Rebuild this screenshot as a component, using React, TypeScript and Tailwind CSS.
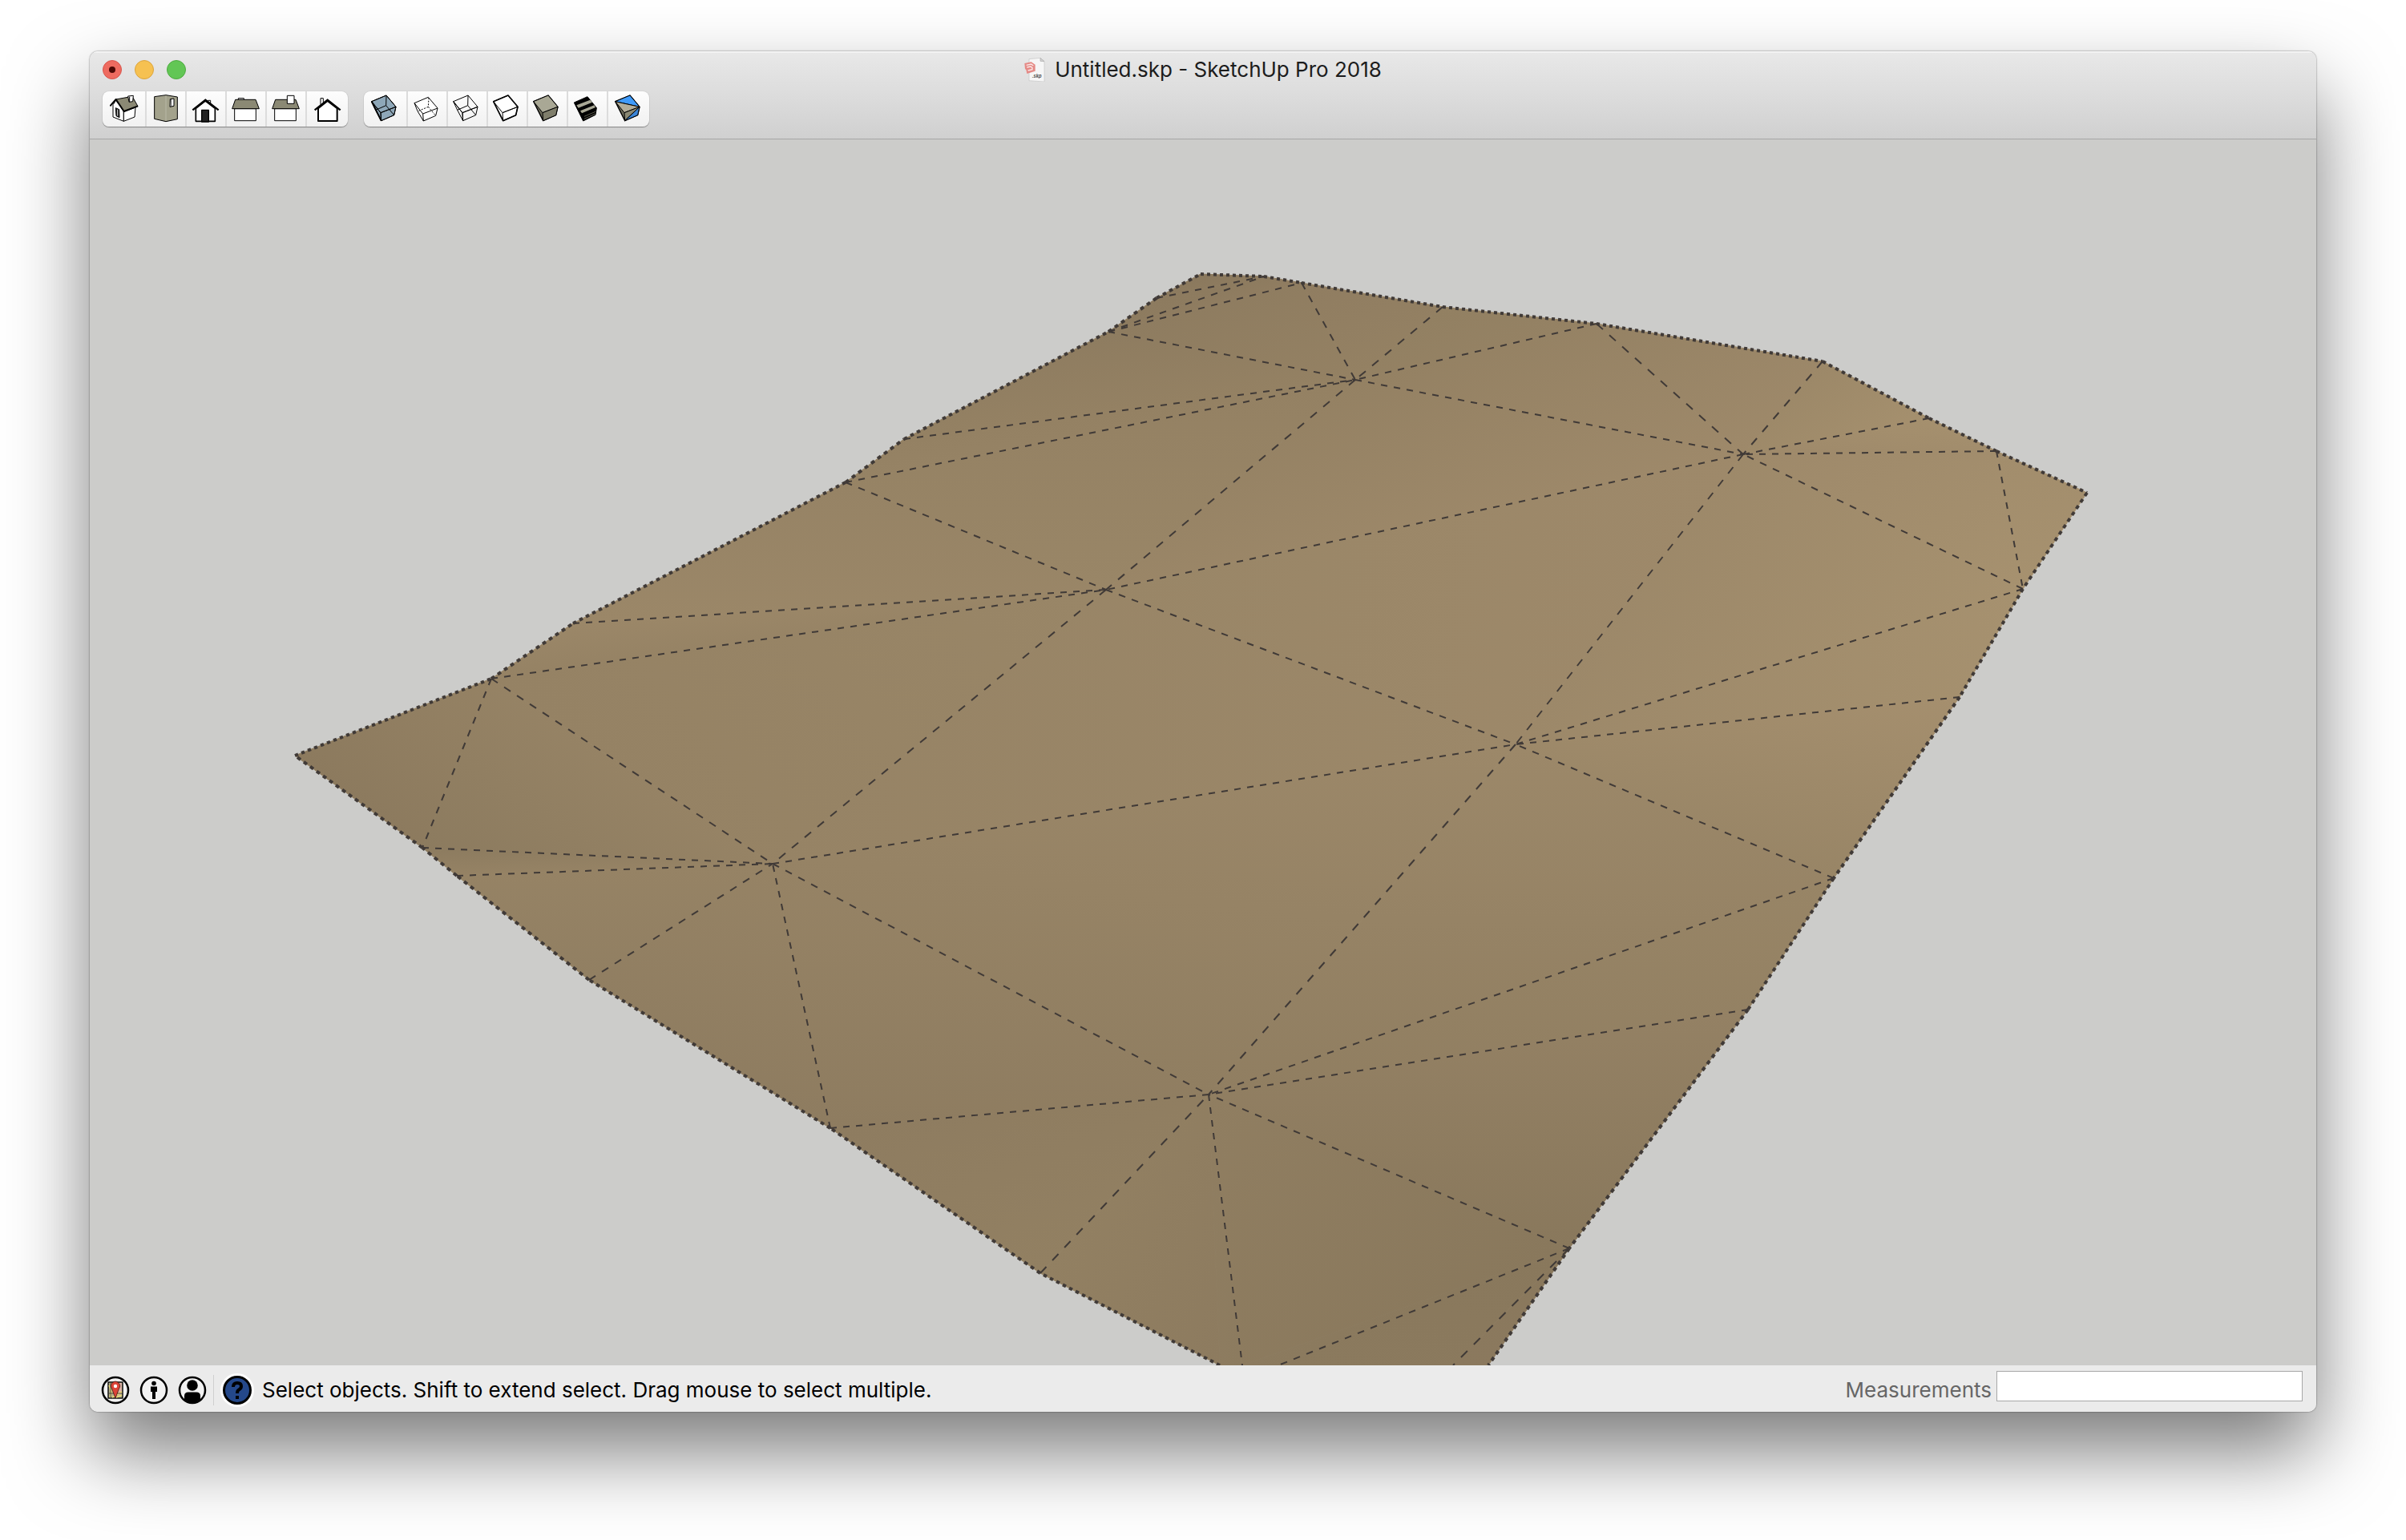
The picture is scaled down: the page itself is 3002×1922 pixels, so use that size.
import React from 'react'

// Types
type Point = [number, number]

interface Vertex {
  at: Point
  shade: number
}

interface ToolItem {
  label: string
  icon: React.ReactNode
}

// Terrain vertices: position on the canvas and shade, 0 is darkest and 1 is lightest
const vertices: Record<string, Vertex> = {
  a: { at: [1498, 342], shade: 0.05 },
  b: { at: [1577, 345], shade: 0.15 },
  c: { at: [1624, 353], shade: 0.24 },
  d: { at: [1800, 383], shade: 0.32 },
  e: { at: [1992, 404], shade: 0.42 },
  f: { at: [2274, 451], shade: 0.62 },
  g: { at: [2407, 522], shade: 0.92 },
  h: { at: [2491, 563], shade: 0.82 },
  i: { at: [2604, 615], shade: 0.88 },
  j: { at: [2524, 735], shade: 0.95 },
  k: { at: [2445, 870], shade: 0.9 },
  l: { at: [2288, 1096], shade: 0.5 },
  m: { at: [2181, 1260], shade: 0.38 },
  n: { at: [1958, 1558], shade: 0.02 },
  o: { at: [1857, 1704], shade: 0.08 },
  p: { at: [1522, 1704], shade: 0.16 },
  q: { at: [1298, 1589], shade: 0.32 },
  r: { at: [1036, 1408], shade: 0.2 },
  s: { at: [735, 1223], shade: 0.28 },
  t: { at: [570, 1093], shade: 0.42 },
  u: { at: [527, 1058], shade: 0.14 },
  v: { at: [368, 943], shade: 0.12 },
  w: { at: [613, 847], shade: 0.42 },
  x: { at: [715, 778], shade: 0.6 },
  y: { at: [1055, 602], shade: 0.44 },
  z: { at: [1128, 548], shade: 0.36 },
  aa: { at: [1383, 414], shade: 0.2 },
  ab: { at: [1443, 372], shade: 0.15 },
  i1: { at: [1691, 474], shade: 0.36 },
  i2: { at: [2175, 567], shade: 0.68 },
  i3: { at: [1380, 736], shade: 0.54 },
  i4: { at: [1891, 929], shade: 0.64 },
  i5: { at: [964, 1078], shade: 0.44 },
  i6: { at: [1508, 1366], shade: 0.26 },
  b1: { at: [1550, 1704], shade: 0.13 },
  b2: { at: [1595, 1704], shade: 0.1 },
  b3: { at: [1813, 1704], shade: 0.08 },
}

const triangles = [
  'a b ab', 'ab b aa', 'aa b c', 'aa c i1', 'c d i1', 'd e i1', 'e i1 i2', 'e f i2',
  'f g i2', 'g h i2', 'h j i2', 'h i j', 'j i2 i4', 'j k i4', 'k l i4', 'l i4 i6',
  'l m i6', 'm n i6', 'i1 i2 i3', 'i2 i3 i4', 'aa z i1', 'z y i1', 'y i1 i3', 'y x i3',
  'x w i3', 'w i3 i5', 'i3 i4 i5', 'i4 i5 i6', 'w u v', 'w u i5', 'u t i5', 't s i5',
  's r i5', 'r i5 i6', 'r q i6', 'q p i6', 'p b1 i6', 'i6 b1 n', 'b1 b2 n', 'b2 b3 n', 'b3 o n',
]

const innerEdges = [
  'ab b', 'aa b', 'aa c', 'aa i1', 'c i1', 'd i1', 'e i1', 'i1 i2', 'i1 i3', 'z i1', 'y i1',
  'y i3', 'e i2', 'f i2', 'g i2', 'h i2', 'j i2', 'i2 i3', 'i2 i4', 'h j', 'j i4', 'k i4',
  'l i4', 'i3 i4', 'x i3', 'w i3', 'i3 i5', 'w i5', 'w u', 'u i5', 't i5', 's i5', 'r i5',
  'i5 i4', 'i5 i6', 'i4 i6', 'l i6', 'm i6', 'n i6', 'r i6', 'q i6', 'i6 b1', 'n b2', 'n b3',
]

const outerEdges = [
  'a b', 'b c', 'c d', 'd e', 'e f', 'f g', 'g h', 'h i', 'i j', 'j k', 'k l', 'l m', 'm n',
  'n o', 'p q', 'q r', 'r s', 's t', 't u', 'u v', 'v w', 'w x', 'x y', 'y z', 'z aa', 'aa ab', 'ab a',
]

const pick = (names: string) => names.split(' ').map((name) => vertices[name])

const shadeColor = (t: number) => {
  const mix = (from: number, to: number) => Math.round(from + (to - from) * t)
  return `rgb(${mix(136, 168)}, ${mix(119, 146)}, ${mix(92, 112)})`
}

// A shade that varies linearly over a triangle is a linear gradient along its slope
const Facet: React.FC<{ names: string }> = ({ names }) => {
  const [p, q, r] = pick(names)
  const [ax, ay] = [q.at[0] - p.at[0], q.at[1] - p.at[1]]
  const [bx, by] = [r.at[0] - p.at[0], r.at[1] - p.at[1]]
  const det = ax * by - ay * bx
  const dq = q.shade - p.shade
  const dr = r.shade - p.shade
  const gx = (dq * by - dr * ay) / det
  const gy = (ax * dr - bx * dq) / det
  const steep = gx * gx + gy * gy
  const low = Math.min(p.shade, q.shade, r.shade)
  const high = Math.max(p.shade, q.shade, r.shade)
  const along = (shade: number): Point => [
    p.at[0] + (gx * (shade - p.shade)) / steep,
    p.at[1] + (gy * (shade - p.shade)) / steep,
  ]
  const points = [p, q, r].map((v) => v.at.join(',')).join(' ')
  if (steep === 0) {
    return <polygon points={points} fill={shadeColor(low)} stroke={shadeColor(low)} />
  }
  const id = `facet-${names.replace(/ /g, '-')}`
  const [x1, y1] = along(low)
  const [x2, y2] = along(high)
  return (
    <>
      <linearGradient id={id} gradientUnits="userSpaceOnUse" x1={x1} y1={y1} x2={x2} y2={y2}>
        <stop offset="0" stopColor={shadeColor(low)} />
        <stop offset="1" stopColor={shadeColor(high)} />
      </linearGradient>
      <polygon points={points} fill={`url(#${id})`} stroke={`url(#${id})`} strokeLinejoin="round" />
    </>
  )
}

// The dash is measured along the longer axis of the line, as a stippled GL line is
const Edge: React.FC<{ names: string; dash: number; width: number }> = ({ names, dash, width }) => {
  const [p, q] = pick(names)
  const dx = q.at[0] - p.at[0]
  const dy = q.at[1] - p.at[1]
  const length = (dash * Math.hypot(dx, dy)) / Math.max(Math.abs(dx), Math.abs(dy))
  return (
    <line
      x1={p.at[0]}
      y1={p.at[1]}
      x2={q.at[0]}
      y2={q.at[1]}
      stroke="#403a37"
      strokeWidth={width}
      strokeDasharray={`${length} ${length}`}
    />
  )
}

const Terrain: React.FC = () => (
  <svg viewBox="112 174 2778 1530" className="block w-full" role="img" aria-label="Terrain">
    {triangles.map((names) => <Facet key={names} names={names} />)}
    {innerEdges.map((names) => <Edge key={names} names={names} dash={8} width={2} />)}
    {outerEdges.map((names) => <Edge key={names} names={names} dash={4} width={4} />)}
  </svg>
)

// Toolbar icons
const Icon: React.FC<{ children: React.ReactNode }> = ({ children }) => (
  <svg viewBox="0 0 108 108" className="w-9 h-9" fill="none" stroke="#000" strokeWidth="3" strokeLinejoin="round">
    {children}
  </svg>
)

const views: ToolItem[] = [
  {
    label: 'Iso',
    icon: (
      <Icon>
        <path d="M12 38 23 22 52 62V100L12 84Z" fill="#fff" />
        <path d="M52 64 96 48 93 84 52 100Z" fill="#fff" />
        <path d="M22 50 35 56 36 86 24 80Z" fill="#222" />
        <path d="M29 56V80" stroke="#ddd" />
        <path d="M23 18 84 7 105 44 53 64Z" fill="#8b8974" />
        <path d="M1 43 23 18 53 63 105 43" strokeWidth="6" />
        <path d="M68 6 88 4 86 26 72 28Z" fill="#fff" />
        <path d="M74 8V27" />
      </Icon>
    ),
  },
  {
    label: 'Top',
    icon: (
      <Icon>
        <path d="M11 8 54 2 97 9V92L54 101 11 91Z" fill="#a3a28c" />
        <path d="M54 4V99" stroke="#c4c3b4" strokeWidth="2" />
        <path d="M70 17 84 15V43L69 46Z" fill="#fff" />
        <path d="M74 17V44" strokeWidth="2" />
      </Icon>
    ),
  },
  {
    label: 'Front',
    icon: (
      <Icon>
        <path d="M62 28V22H71V34" />
        <path d="M16 52 52 24 88 52V100H16Z" fill="#fff" strokeWidth="5" />
        <path d="M38 102V58H64V102Z" fill="#222" strokeWidth="4" />
        <path d="M4 58 52 20 101 58" strokeWidth="7" strokeLinejoin="miter" />
      </Icon>
    ),
  },
  {
    label: 'Right',
    icon: (
      <Icon>
        <path d="M25 18V14H46V18" />
        <path d="M11 53H91V98H11Z" fill="#fff" />
        <path d="M14 19H90L103 53H2Z" fill="#8b8974" />
      </Icon>
    ),
  },
  {
    label: 'Back',
    icon: (
      <Icon>
        <path d="M11 53H91V98H11Z" fill="#fff" />
        <path d="M14 19H90L103 53H2Z" fill="#8b8974" />
        <path d="M58 4H84V34H58Z" fill="#fff" />
      </Icon>
    ),
  },
  {
    label: 'Left',
    icon: (
      <Icon>
        <path d="M27 38V14H37V30" fill="#fff" />
        <path d="M18 52 53 24 89 52V99H18Z" fill="#fff" strokeWidth="6" />
        <path d="M5 58 53 20 101 58" strokeWidth="7" strokeLinejoin="miter" />
      </Icon>
    ),
  },
]

const cubeTop = 'M2 26 57 3 93 46 36 68Z'
const cubeFront = 'M36 68 93 46 86 77 38 98Z'
const cubeSide = 'M2 26 36 68 38 98 17 58Z'
const cubeBack = 'M57 3 56 41M56 41 17 58M56 41 86 77'
const cubeHull = 'M2 26 57 3 93 46 86 77 38 98Z'

const styles: ToolItem[] = [
  {
    label: 'X-Ray',
    icon: (
      <Icon>
        <path d={cubeHull} fill="#8ea7b8" />
        <path d={`${cubeTop}${cubeFront}${cubeSide}${cubeBack}`} />
        <path d="M2 26 38 98" strokeWidth="6" />
      </Icon>
    ),
  },
  {
    label: 'Back Edges',
    icon: (
      <Icon>
        <path d="M6 32 58 10 93 51 86 79 40 99 18 62Z" fill="#fff" />
        <path d="M6 32 38 72 93 51M38 72 40 99" />
        <path d="M60 12 58 46M58 46 20 62M58 46 86 79" strokeDasharray="6 5" />
      </Icon>
    ),
  },
  {
    label: 'Wireframe',
    icon: (
      <Icon>
        <path d={`${cubeTop}${cubeFront}${cubeSide}${cubeBack}`} />
      </Icon>
    ),
  },
  {
    label: 'Hidden Line',
    icon: (
      <Icon>
        <path d={cubeHull} fill="#fff" strokeWidth="5" />
        <path d={`${cubeTop}${cubeFront}`} />
      </Icon>
    ),
  },
  {
    label: 'Shaded',
    icon: (
      <Icon>
        <path d={cubeHull} fill="#6b6a5a" strokeWidth="4" />
        <path d={cubeTop} fill="#a9a895" />
        <path d={cubeFront} fill="#7f7e6b" />
      </Icon>
    ),
  },
  {
    label: 'Shaded With Textures',
    icon: (
      <Icon>
        <path d="M4 30 54 8 88 50 84 76 38 99Z" fill="#000" />
        <path d="M13 40 64 20 72 29 20 50ZM27 61 79 40 84 48 33 70Z" fill="#a9a895" stroke="none" />
        <path d="M42 82 84 64M42 91 84 72" stroke="#8b8974" strokeWidth="2" />
      </Icon>
    ),
  },
  {
    label: 'Monochrome',
    icon: (
      <Icon>
        <path d={cubeHull} fill="#6b6a5a" strokeWidth="4" />
        <path d="M2 26 57 3 93 46Z" fill="#3f9bfb" />
        <path d="M2 26 93 46 36 68Z" fill="#b3ae9a" />
        <path d="M36 68 93 46 38 98Z" fill="#8b8974" />
        <path d="M93 46 86 77 38 98Z" fill="#3b84d6" />
      </Icon>
    ),
  },
]

// ToolGroup Component
const ToolGroup: React.FC<{ label: string; items: ToolItem[] }> = ({ label, items }) => (
  <div
    role="group"
    aria-label={label}
    className="flex h-11 rounded-lg bg-linear-to-b from-[#fdfdfd] to-[#f1f1f1] divide-x-2 divide-[#dcdcdc] shadow-[0_1px_1px_rgba(0,0,0,0.35),0_0_1px_rgba(0,0,0,0.3)]"
  >
    {items.map((item) => (
      <button
        key={item.label}
        type="button"
        aria-label={item.label}
        className="w-[50px] first:w-[55px] last:w-[51px] flex items-center justify-center"
      >
        {item.icon}
      </button>
    ))}
  </div>
)

const FileIcon: React.FC = () => (
  <svg viewBox="0 0 78 90" className="w-[26px] h-[30px]">
    <path d="M18 5 60 1 75 14V90L18 86Z" fill="#f6f6f6" stroke="#c4c4c4" strokeWidth="2" />
    <path d="M60 1V13L75 14Z" fill="#d2d2d2" stroke="#aaa" strokeWidth="2" />
    <path d="M1 21 26 16 41 26V50L10 60 7 46 3 42Z" fill="#e58a86" />
    <path d="M8 28 26 24 34 30M10 36 24 33 30 38 30 44 14 48" fill="none" stroke="#fbe9e8" strokeWidth="4" />
    <text x="29" y="75" fontSize="17" fontWeight="700" fontStyle="italic" fill="#555" fontFamily="Inter, sans-serif">
      .skp
    </text>
  </svg>
)

// TitleBar Component
const TitleBar: React.FC = () => (
  <header className="bg-linear-to-b from-[#e8e8e8] to-[#d0d0d0] border-t-2 border-t-[#f3f3f3] border-b border-b-[#a6a6a6]">
    <div className="h-[42px] px-4 grid grid-cols-[1fr_auto_1fr] items-center">
      <div className="flex gap-4">
        <button
          type="button"
          aria-label="Close"
          className="w-6 h-6 rounded-full bg-[#ee6b60] border border-[#d9544b] flex items-center justify-center"
        >
          <span className="w-2 h-2 rounded-full bg-[#4d0905]" />
        </button>
        <button type="button" aria-label="Minimize" className="w-6 h-6 rounded-full bg-[#f6c151] border border-[#dca43c]" />
        <button type="button" aria-label="Zoom" className="w-6 h-6 rounded-full bg-[#62c655] border border-[#4dab40]" />
      </div>
      <div className="flex items-center gap-3">
        <FileIcon />
        <h1 className="text-[26px] leading-8 text-[#1c1c1c] whitespace-nowrap">Untitled.skp - SketchUp Pro 2018</h1>
      </div>
    </div>
    <div className="px-4 pt-[6px] pb-[15px] flex gap-5">
      <ToolGroup label="Views" items={views} />
      <ToolGroup label="Styles" items={styles} />
    </div>
  </header>
)

// StatusBar Component
const StatusBar: React.FC = () => (
  <footer className="h-[58px] pl-[14px] pr-[17px] bg-[#ebebeb] flex items-center justify-between">
    <div className="pt-1 flex items-center">
      <div className="flex items-center gap-3">
        <button type="button" aria-label="Geo-location">
          <svg viewBox="0 0 36 36" className="w-9 h-9">
            <circle cx="18" cy="18" r="16" fill="#f2f2f2" stroke="#000" strokeWidth="2.5" />
            <path d="M9 8H27V28H9Z" fill="#b9b48c" stroke="#111" strokeWidth="1.5" />
            <path d="M21 9H26V22L21 25Z" fill="#dcb3a6" />
            <path d="M10 12 13 20 11 27M14 27 26 20M19 27 26 24" fill="none" stroke="#ecdc74" strokeWidth="1.5" />
            <path d="M12 9V27M10 22H26" stroke="#333" strokeWidth="0.8" />
            <path d="M18 28 13.5 16A5.5 5.5 0 1 1 22.5 16Z" fill="#dc4438" stroke="#4a1410" strokeWidth="0.8" />
            <circle cx="18" cy="13" r="2.2" fill="#fff" />
          </svg>
        </button>
        <button type="button" aria-label="Credits">
          <svg viewBox="0 0 36 36" className="w-9 h-9">
            <circle cx="18" cy="18" r="16" fill="#f2f2f2" stroke="#000" strokeWidth="2.5" />
            <circle cx="18" cy="9.5" r="2.8" />
            <path d="M14 13.5H22V20H20V29H16V20H14Z" />
          </svg>
        </button>
        <button type="button" aria-label="Sign in">
          <svg viewBox="0 0 36 36" className="w-9 h-9">
            <circle cx="18" cy="18" r="16" fill="#f2f2f2" stroke="#000" strokeWidth="2.5" />
            <circle cx="18" cy="12" r="6.8" />
            <path d="M8 30V25Q8 20.5 13 20.5H23Q28 20.5 28 25V30Q18 37 8 30Z" />
          </svg>
        </button>
      </div>
      <div className="mx-2 w-px h-[38px] bg-[#cfcfcf]" />
      <button type="button" aria-label="Help" className="w-[42px] h-[42px] rounded-full bg-white flex items-center justify-center">
        <svg viewBox="0 0 36 36" className="w-9 h-9">
          <circle cx="18" cy="18" r="16.5" fill="#24488a" stroke="#000" strokeWidth="3" />
          <path d="M13 14Q13 9 18 9Q23 9 23 13Q23 16 20 17.5Q18 18.5 18 22" fill="none" stroke="#000" strokeWidth="4" />
          <path d="M16 25H20V29H16Z" />
        </svg>
      </button>
      <p className="ml-[10px] text-[26px] leading-7 text-black whitespace-nowrap">
        Select objects. Shift to extend select. Drag mouse to select multiple.
      </p>
    </div>
    <div className="self-start pt-[7px] flex items-end gap-[6px]">
      <label htmlFor="measurements" className="text-[26px] leading-7 text-[#666]">
        Measurements
      </label>
      <input id="measurements" type="text" className="w-[382px] h-[38px] px-2 text-[26px] bg-white border border-[#a8a8a8]" />
    </div>
  </footer>
)

const App: React.FC = () => {
  return (
    <div className="px-28 pt-16 pb-40 bg-white font-['Inter',sans-serif]">
      <div className="rounded-[10px] shadow-[0_50px_100px_rgba(0,0,0,0.52),0_0_2px_rgba(0,0,0,0.6)]">
        <div className="rounded-[10px] overflow-hidden">
          <TitleBar />
          <main className="bg-[#ccccca]">
            <Terrain />
          </main>
          <StatusBar />
        </div>
      </div>
    </div>
  )
}

export default App
